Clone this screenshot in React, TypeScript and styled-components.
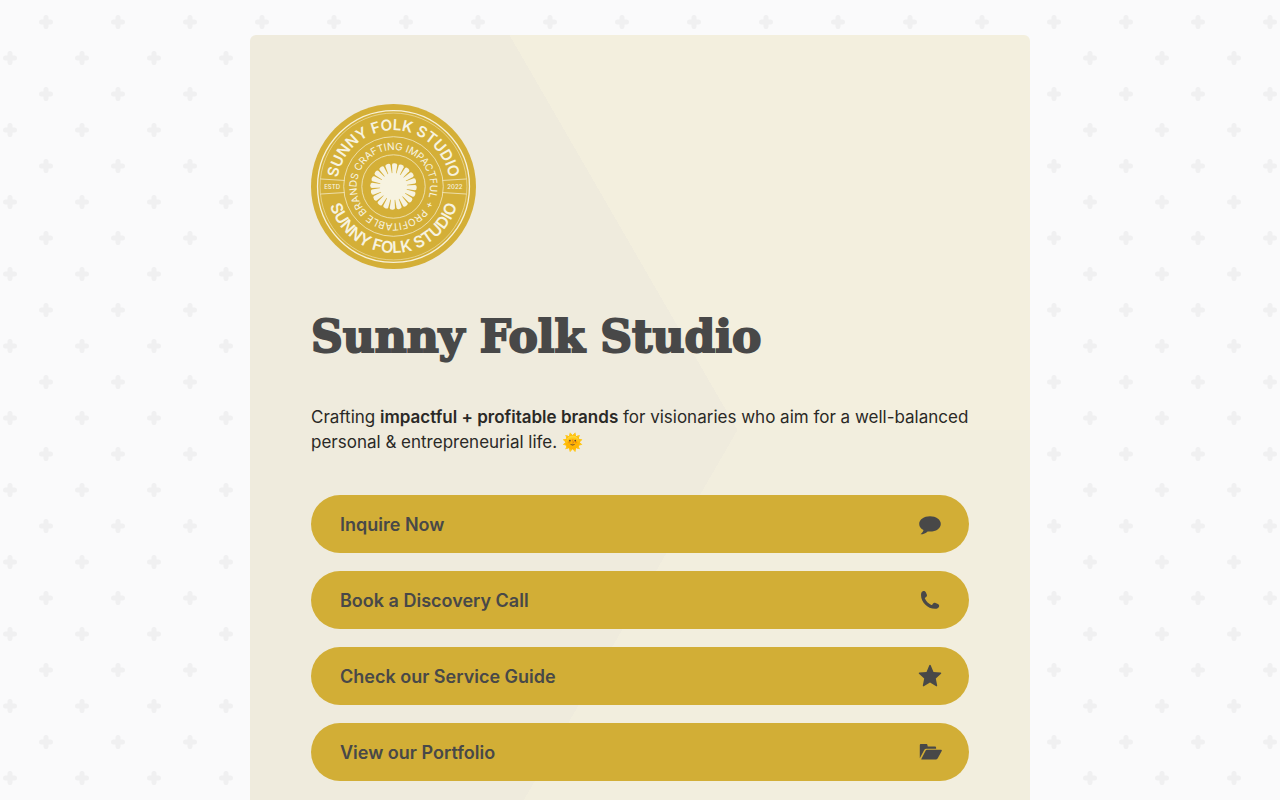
import React from "react";
import styled, { createGlobalStyle } from "styled-components";

const plus = encodeURIComponent(
  "<svg xmlns='http://www.w3.org/2000/svg' width='72' height='72'><g stroke='#f0f0f1' stroke-width='5' stroke-linecap='round'><path d='M41.500 22h9M46 17.500v9M5.500 58h9M10 53.500v9'/></g></svg>"
);

const GlobalStyle = createGlobalStyle`
  * { box-sizing: border-box; }
  body {
    margin: 0;
    background: #fafafb url("data:image/svg+xml,${plus}");
    color: #2a2926;
    font-family: Inter, "Open Sans", sans-serif;
  }
`;

const Page = styled.main`
  display: flex;
  justify-content: center;
  padding: 35px 24px;
`;

const Card = styled.article`
  display: flex;
  flex-direction: column;
  align-items: stretch;
  gap: 40px;
  width: 100%;
  max-width: 780px;
  padding: 69px 61px;
  border-radius: 6px;
  background: conic-gradient(
    from 0deg at 62.5% 395px,
    #f3efde 90deg,
    #f2eede 90deg 210deg,
    #efebdd 210deg 330deg,
    #f3efde 330deg
  );
`;

const Logo = styled.svg`
  display: block;
  width: 165px;
  height: 165px;
  font-family: Inter, sans-serif;
`;

const Title = styled.h1`
  margin: 0;
  color: #484848;
  font-family: "DejaVu Serif", serif;
  font-size: 44px;
  font-weight: 700;
  line-height: 56px;
  -webkit-text-stroke: 2px #484848;
`;

const Intro = styled.p`
  margin: 0;
  font-size: 17px;
  line-height: 25px;
`;

const Strong = styled.strong`
  font-weight: 600;
`;

const Links = styled.nav`
  display: flex;
  flex-direction: column;
  gap: 18px;
`;

const LinkButton = styled.a`
  display: flex;
  align-items: center;
  justify-content: space-between;
  height: 58px;
  padding: 0 27px 0 29px;
  border-radius: 29px;
  background: #d2ae36;
  color: #484848;
  font-size: 18px;
  font-weight: 600;
  line-height: 25px;
  text-decoration: none;
`;

const Icon = styled.svg`
  width: 24px;
  height: 24px;
  fill: currentColor;
`;

const links = [
  {
    label: "Inquire Now",
    icon: "M12 4.200C6 4.200 1.200 7.500 1.200 11.900c0 2.700 1.700 4.900 4.300 6.200-.4 1.600-1.400 3-3 4.200 2.900 0 5.300-1.200 7.100-2.900.8.1 1.600.2 2.400.2 6 0 10.800-3.300 10.800-7.700S18 4.200 12 4.200z",
  },
  {
    label: "Book a Discovery Call",
    icon: "M4.800 3.200C5.900 2.700 7.200 3.200 7.800 4.200l1 2.200c.4 1 .1 2-.7 2.600l-1 .8c-.3.300-.3.600-.1 1 1.400 2.800 3.600 5 6.300 6.200.4.200.7.100.9-.2l.7-1c.6-.9 1.600-1.200 2.600-.8l2.400.9c1 .5 1.500 1.500 1.200 2.600-.5 1.500-2 2.300-4 2.300C9.300 20.800 3.100 14.200 3 7c0-1.900.6-3.300 1.800-3.800z",
  },
  {
    label: "Check our Service Guide",
    icon: "M11.300 1.300c.3-.7 1.100-.7 1.400 0l2.800 6.600 7.100.7c.7.100.9.700.4 1.200l-5.200 4.700 1.400 7.100c.1.700-.4 1-1 .7L12 18.500l-6.200 3.800c-.6.300-1.100 0-1-.7l1.400-7.100L1 9.800c-.5-.5-.3-1.100.4-1.200l7.100-.7z",
  },
  {
    label: "View our Portfolio",
    icon: "M1.800 18.200V5.300c0-.8.500-1.300 1.300-1.300h5.100c.8 0 1.200.5 1.300 1.200l.2 1.300h7.100c.8 0 1.300.5 1.300 1.300v1H8.300c-.9 0-1.600.4-2.100 1.200zM3.200 19.200l4.500-8.600c.3-.5.700-.8 1.300-.8h14c.8 0 1.100.5.700 1.100l-4.100 7.700c-.3.500-.8.800-1.400.8H3.500c-.3 0-.4 0-.3-.2z",
  },
];

const rays = Array.from({ length: 20 }, (_, i) => i * 18);

function StudioBadge() {
  return (
    <Logo viewBox="0 0 164 164" role="img" aria-label="Sunny Folk Studio badge">
      <defs>
        <path id="top-arc" d="M26 82a56 56 0 0 1 112 0" />
        <path id="bottom-arc" d="M16 82a66 66 0 0 0 132 0" />
        <path id="inner-ring" d="M82 118.500a36.500 36.500 0 1 1 .1 0" transform="rotate(114 82 82)" />
      </defs>
      <circle cx="82" cy="82" r="82" fill="#d4af37" />
      <g fill="none" stroke="#f7f1d8">
        <circle cx="82" cy="82" r="75.500" strokeWidth="1.300" />
        <circle cx="82" cy="82" r="73" strokeWidth=".5" />
        <circle cx="82" cy="82" r="49.500" strokeWidth=".7" />
        <circle cx="82" cy="82" r="31.500" strokeWidth=".7" />
        <path d="M9.400 74.500 33.300 76M9.400 89.500 33.300 88M154.600 74.500 130.700 76M154.600 89.500 130.700 88" strokeWidth=".7" />
      </g>
      <g fill="#f7f3e0">
        <circle cx="82" cy="82" r="13.500" />
        {rays.map((a) => (
          <path key={a} d="M80.400 71 79.400 60.500q0-1.600 2.600-1.600t2.600 1.600L83.600 71z" transform={`rotate(${a + 3} 82 82)`} />
        ))}
      </g>
      <g fill="#f7f3e0" textAnchor="middle">
        <text fontSize="15" fontWeight="600">
          <textPath href="#top-arc" startOffset="50%">SUNNY FOLK STUDIO</textPath>
        </text>
        <text fontSize="16" fontWeight="600">
          <textPath href="#bottom-arc" startOffset="50%">SUNNY FOLK STUDIO</textPath>
        </text>
        <text fontSize="10" textAnchor="start">
          <textPath href="#inner-ring">CRAFTING IMPACTFUL + PROFITABLE BRANDS</textPath>
        </text>
        <text x="21" y="84" fontSize="6" fontWeight="500">ESTD</text>
        <text x="143" y="84" fontSize="6" fontWeight="500">2022</text>
      </g>
    </Logo>
  );
}

export default function App() {
  return (
    <>
      <GlobalStyle />
      <Page>
        <Card>
          <StudioBadge />
          <Title>Sunny Folk Studio</Title>
          <Intro>
            Crafting <Strong>impactful + profitable brands</Strong> for visionaries who aim for a well-balanced
            personal &amp; entrepreneurial life. 🌞
          </Intro>
          <Links aria-label="Studio links">
            {links.map((link) => (
              <LinkButton key={link.label} href="#">
                {link.label}
                <Icon viewBox="0 0 24 24" aria-hidden="true">
                  <path d={link.icon} />
                </Icon>
              </LinkButton>
            ))}
          </Links>
        </Card>
      </Page>
    </>
  );
}
